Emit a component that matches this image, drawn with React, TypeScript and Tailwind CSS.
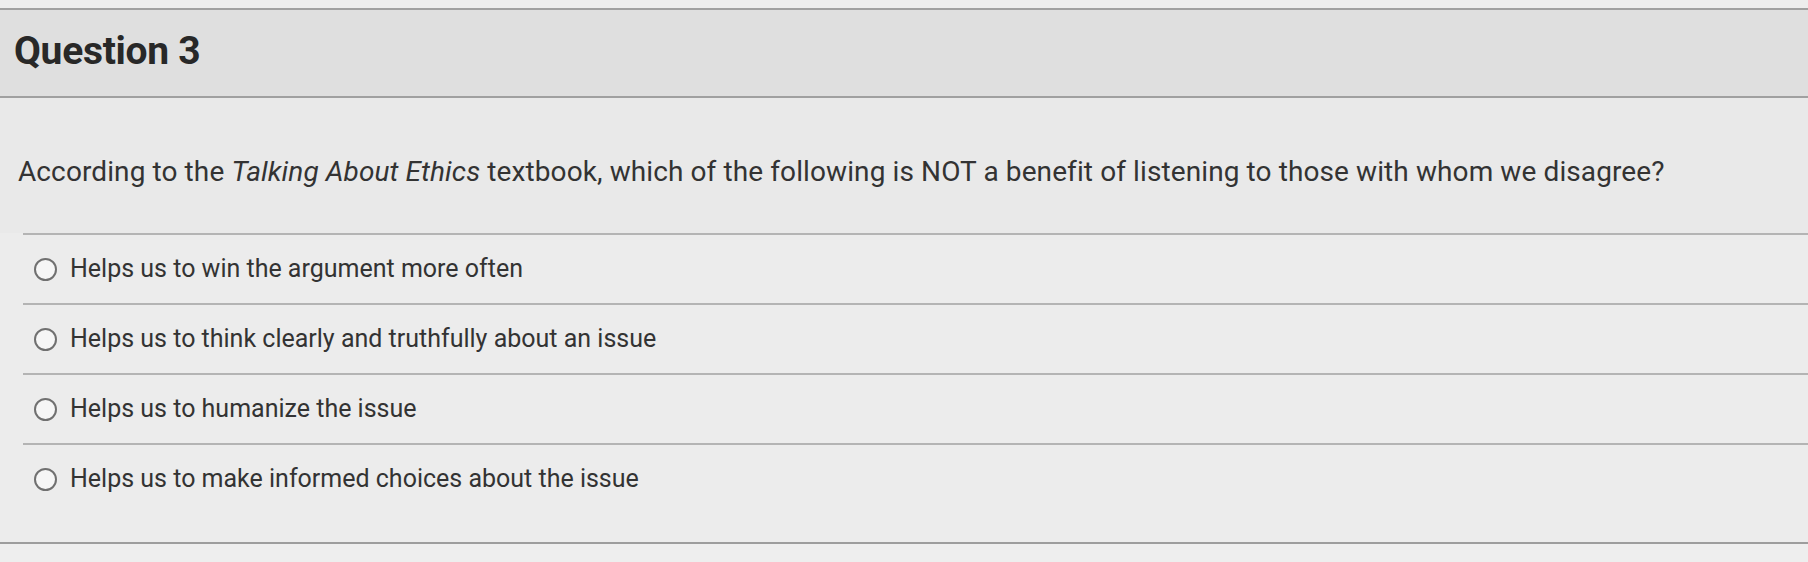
import React from 'react';

const options = [
  'Helps us to win the argument more often',
  'Helps us to think clearly and truthfully about an issue',
  'Helps us to humanize the issue',
  'Helps us to make informed choices about the issue',
];

const App = () => {
  return (
    <div
      className="w-[1808px] h-[562px] bg-[#ebebeb] text-[#333333] overflow-hidden"
      style={{ fontFamily: 'Roboto, "Liberation Sans", sans-serif' }}
    >
      <div className="h-[8px] bg-[#ededed]" />
      {/* Header */}
      <div className="h-[90px] bg-[#dfdfdf] border-y-2 border-[#a0a0a0] flex items-center pl-[14px]">
        <h2 className="text-[39px] font-bold text-[#282828] tracking-[-0.3px] -mt-[4px]">Question 3</h2>
      </div>

      {/* Question */}
      <div className="pl-[18px] pt-[57px] pb-[44px] bg-[#e9e9e9]">
        <p className="text-[28px] leading-[34px] tracking-[0.1px]">
          According to the <em>Talking About Ethics</em> textbook, which of the following is NOT a benefit of listening to those with whom we disagree?
        </p>
      </div>

      {/* Options */}
      <div className="pl-[23px] bg-[#ececec]">
        {options.map((opt, i) => (
          <div
            key={i}
            className="h-[70px] flex items-center gap-[13px] pl-[11px] border-t-2 border-[#b4b4b4]"
          >
            <span className="w-[23px] h-[23px] rounded-full border-2 border-[#707070] bg-[#f6f6f6] shrink-0" />
            <span className="text-[25px] text-[#333333]">{opt}</span>
          </div>
        ))}
        <div className="h-[29px]" />
      </div>
      <div className="border-t-2 border-[#9d9d9d] h-[22px] bg-[#eeeeee]" />
    </div>
  );
};

export default App;
